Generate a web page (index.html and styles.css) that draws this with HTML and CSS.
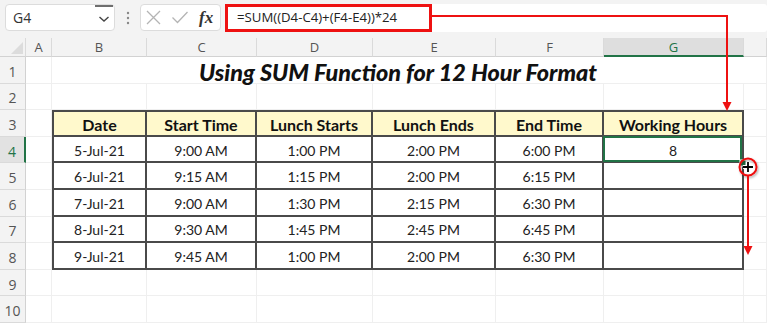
FILE: index.html
```html
<!DOCTYPE html>
<html>
<head>
<meta charset="utf-8">
<link rel="stylesheet" href="styles.css">
</head>
<body>
<div class="app">
  <div class="topbar">
    <div class="namebox">
      <span class="nb-text">G4</span>
      <span class="dd">
        <svg width="12" height="8" viewBox="0 0 12 8"><path d="M1.5 2 L6 6 L10.5 2" fill="none" stroke="#444" stroke-width="1.4"/></svg>
      </span>
    </div>
    <div class="grip">
      <svg width="4" height="14" viewBox="0 0 4 14"><circle cx="2" cy="2" r="1.2" fill="#888"/><circle cx="2" cy="7" r="1.2" fill="#888"/><circle cx="2" cy="12" r="1.2" fill="#888"/></svg>
    </div>
    <div class="fxbox">
      <svg class="ic" width="17" height="17" viewBox="0 0 17 17"><path d="M2 2 L15 15 M15 2 L2 15" stroke="#b4b4b4" stroke-width="1.3" fill="none"/></svg>
      <svg class="ic" width="18" height="15" viewBox="0 0 18 15"><path d="M1.5 7.5 L6.5 12.5 L16.5 2" stroke="#b4b4b4" stroke-width="1.3" fill="none"/></svg>
      <span class="fx">fx</span>
    </div>
    <div class="formula">
      <span class="redbox">=SUM((D4-C4)+(F4-E4))*24</span>
    </div>
  </div>

  <div class="sheet">
    <div class="ch corner"><svg width="12" height="12" viewBox="0 0 12 12"><path d="M12 0 L12 12 L0 12 Z" fill="#dcdcdc"/></svg></div>
    <div class="ch">A</div>
    <div class="ch">B</div>
    <div class="ch">C</div>
    <div class="ch">D</div>
    <div class="ch">E</div>
    <div class="ch">F</div>
    <div class="ch ch-sel">G</div>
    <div class="ch"></div>

    <div class="rh">1</div>
    <div class="c"></div>
    <div class="c title">Using SUM Function for 12 Hour Format</div>
    <div class="c"></div>

    <div class="rh">2</div>
    <div class="c"></div><div class="c"></div><div class="c"></div><div class="c"></div><div class="c"></div><div class="c"></div><div class="c"></div><div class="c"></div>

    <div class="rh">3</div>
    <div class="c"></div>
    <div class="t hd l">Date</div>
    <div class="t hd">Start Time</div>
    <div class="t hd">Lunch Starts</div>
    <div class="t hd">Lunch Ends</div>
    <div class="t hd">End Time</div>
    <div class="t hd">Working Hours</div>
    <div class="c"></div>

    <div class="rh rh-sel">4</div>
    <div class="c"></div>
    <div class="t l">5-Jul-21</div>
    <div class="t">9:00 AM</div>
    <div class="t">1:00 PM</div>
    <div class="t">2:00 PM</div>
    <div class="t">6:00 PM</div>
    <div class="t sel">8</div>
    <div class="c"></div>

    <div class="rh">5</div>
    <div class="c"></div>
    <div class="t l">6-Jul-21</div>
    <div class="t">9:15 AM</div>
    <div class="t">1:15 PM</div>
    <div class="t">2:00 PM</div>
    <div class="t">6:15 PM</div>
    <div class="t"></div>
    <div class="c"></div>

    <div class="rh">6</div>
    <div class="c"></div>
    <div class="t l">7-Jul-21</div>
    <div class="t">9:00 AM</div>
    <div class="t">1:30 PM</div>
    <div class="t">2:15 PM</div>
    <div class="t">6:30 PM</div>
    <div class="t"></div>
    <div class="c"></div>

    <div class="rh">7</div>
    <div class="c"></div>
    <div class="t l">8-Jul-21</div>
    <div class="t">9:30 AM</div>
    <div class="t">1:45 PM</div>
    <div class="t">2:45 PM</div>
    <div class="t">6:45 PM</div>
    <div class="t"></div>
    <div class="c"></div>

    <div class="rh">8</div>
    <div class="c"></div>
    <div class="t l">9-Jul-21</div>
    <div class="t">9:45 AM</div>
    <div class="t">1:00 PM</div>
    <div class="t">2:00 PM</div>
    <div class="t">6:30 PM</div>
    <div class="t"></div>
    <div class="c"></div>

    <div class="rh">9</div>
    <div class="c"></div><div class="c"></div><div class="c"></div><div class="c"></div><div class="c"></div><div class="c"></div><div class="c"></div><div class="c"></div>

    <div class="rh">10</div>
    <div class="c"></div><div class="c"></div><div class="c"></div><div class="c"></div><div class="c"></div><div class="c"></div><div class="c"></div><div class="c"></div>
  </div>

  <svg class="overlay" width="767" height="325" viewBox="0 0 767 325">
    <defs>
      <filter id="sh" x="-50%" y="-50%" width="200%" height="200%">
        <feDropShadow dx="1" dy="1.5" stdDeviation="1.2" flood-color="#000" flood-opacity="0.35"/>
      </filter>
    </defs>
    <path d="M432 16 H727 V103" fill="none" stroke="#ee1111" stroke-width="2"/>
    <path d="M722.5 102 L731.5 102 L727 111 Z" fill="#ee1111"/>
    <rect x="740" y="160" width="6" height="6" fill="#217346" stroke="#fff" stroke-width="1"/>
    <circle cx="748" cy="167" r="8.5" fill="none" stroke="#ee1111" stroke-width="2" filter="url(#sh)"/>
    <path d="M748 176 V247" stroke="#ee1111" stroke-width="2"/>
    <path d="M743.5 246 L752.5 246 L748 255 Z" fill="#ee1111"/>
    <path d="M743 167 H753 M748 162 V172" stroke="#fff" stroke-width="4"/>
    <path d="M743 167 H753 M748 162 V172" stroke="#000" stroke-width="1.8"/>
  </svg>
</div>
</body>
</html>
```

FILE: styles.css
```css
* { box-sizing: border-box; }
html, body { margin: 0; padding: 0; background: #fff; }
body { width: 767px; height: 325px; overflow: hidden; }

.app { position: relative; width: 767px; height: 325px; overflow: hidden; }

.topbar {
  height: 38px;
  background: #f3f3f3;
  display: flex;
  align-items: flex-start;
  padding: 4px 0 0 5px;
  font-family: "Open Sans", "Noto Sans", sans-serif;
}

.namebox {
  width: 110px;
  height: 27px;
  background: #fff;
  border: 1px solid #dcdcdc;
  border-radius: 4px;
  display: flex;
  align-items: stretch;
  justify-content: space-between;
}
.nb-text {
  font-size: 14px;
  color: #333;
  padding-left: 7px;
  line-height: 25px;
}
.dd {
  width: 18px;
  margin-right: 1px;
  border-top: 2px solid #6e6e6e;
  display: flex;
  align-items: center;
  justify-content: center;
}

.grip {
  width: 25px;
  height: 27px;
  display: flex;
  align-items: center;
  justify-content: center;
}

.fxbox {
  width: 81px;
  height: 27px;
  background: #fff;
  border: 1px solid #dcdcdc;
  border-radius: 4px;
  display: flex;
  align-items: center;
  padding-left: 4px;
  gap: 9px;
}
.fx {
  font-family: "Liberation Serif", "DejaVu Serif", serif;
  font-style: italic;
  font-weight: bold;
  font-size: 17px;
  color: #333;
  margin-left: 1px;
}

.formula {
  flex: 1;
  height: 28px;
  margin-left: 4px;
  background: #fff;
  border-radius: 3px;
  display: flex;
}
.redbox {
  width: 207px;
  height: 28px;
  border: 3px solid #ee1111;
  font-size: 13.2px;
  color: #222;
  padding-left: 9px;
  line-height: 21px;
}

.sheet {
  display: grid;
  grid-template-columns: 26px 26px 95px 110px 116px 123px 108px 140px 1fr;
  grid-template-rows: 19px repeat(10, 26.6px);
  font-family: "Lato", "Open Sans", sans-serif;
}

.ch {
  background: #f3f3f3;
  border-right: 1px solid #dadada;
  border-bottom: 1px solid #d2d2d2;
  font-family: "Open Sans", "Noto Sans", sans-serif;
  font-size: 13px;
  color: #555;
  display: flex;
  align-items: center;
  justify-content: center;
}
.corner {
  justify-content: flex-end;
  align-items: flex-end;
  padding: 0 2px 2px 0;
}
.ch-sel {
  background: #dedede;
  color: #217346;
  border-bottom: 2px solid #217346;
}

.rh {
  background: #f3f3f3;
  border-right: 1px solid #d2d2d2;
  border-bottom: 1px solid #dadada;
  font-family: "Open Sans", "Noto Sans", sans-serif;
  font-size: 14px;
  color: #555;
  display: flex;
  align-items: center;
  justify-content: center;
  padding-top: 3px;
}
.rh-sel {
  background: #e2e2e2;
  color: #217346;
  border-right: 2px solid #217346;
}

.c {
  border-right: 1px solid #efefef;
  border-bottom: 1px solid #efefef;
}
.title {
  grid-column: span 6;
  border-right: none;
  display: flex;
  align-items: center;
  justify-content: center;
  font-weight: 900;
  font-style: italic;
  font-size: 23.4px;
  color: #111;
  padding-top: 4px;
}

.t {
  border-right: 2px solid #4a4a4a;
  border-bottom: 2px solid #4a4a4a;
  display: flex;
  align-items: center;
  justify-content: center;
  font-size: 14px;
  color: #222;
  padding-top: 2px;
}
.t.l { border-left: 2px solid #4a4a4a; }
.t.hd {
  background: #fff9cc;
  border-top: 2px solid #4a4a4a;
  font-weight: bold;
  font-size: 16px;
  color: #111;
}
.sel { position: relative; }
.sel::after {
  content: "";
  position: absolute;
  top: -1px;
  left: -1px;
  right: 0;
  bottom: -1px;
  border: 2px solid #217346;
}

.overlay {
  position: absolute;
  left: 0;
  top: 0;
  pointer-events: none;
}
```
